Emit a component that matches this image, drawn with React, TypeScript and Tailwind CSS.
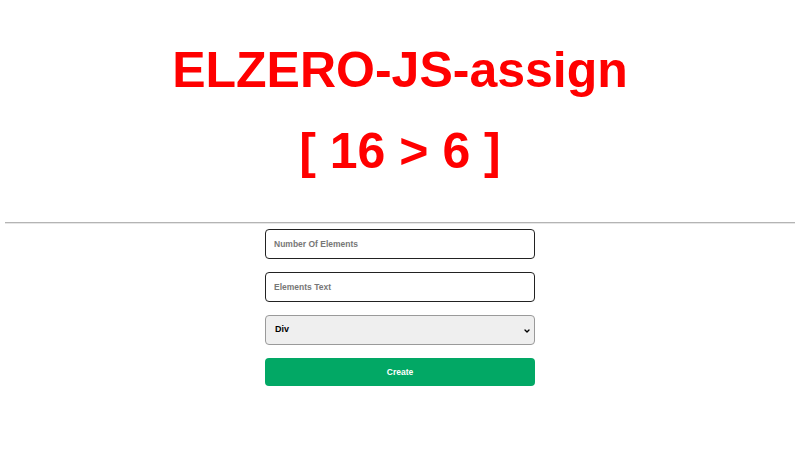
import { ChevronDown } from "lucide-react";

const font = { fontFamily: '"Liberation Sans", Arial, sans-serif' };

export default function App() {
  return (
    <div className="min-h-[450px] bg-white px-[5px]" style={font}>
      <header className="pt-[41px] pb-[42px] text-center text-[50px] font-bold leading-[58px] text-[#f00]">
        <h1>ELZERO-JS-assign</h1>
        <h1 className="mt-[23px]">[ 16 &gt; 6 ]</h1>
      </header>

      <hr className="border-t border-b border-t-[#b4b4b4] border-b-[#e6e6e6]" />

      <form
        className="mx-auto mt-[5px] flex w-[270px] flex-col gap-[13px]"
        onSubmit={(e) => e.preventDefault()}
      >
        <input
          type="number"
          placeholder="Number Of Elements"
          className="h-[30px] rounded-[4px] border border-[#222] px-[8px] text-[8.5px] font-bold text-black outline-none placeholder:text-[#777]"
        />
        <input
          type="text"
          placeholder="Elements Text"
          className="h-[30px] rounded-[4px] border border-[#222] px-[8px] text-[8.5px] font-bold text-black outline-none placeholder:text-[#777]"
        />
        <div className="relative">
          <select className="h-[30px] w-full appearance-none rounded-[4px] border border-[#9a9a9a] bg-[#efefef] px-[9px] text-[9px] font-bold text-black outline-none">
            <option>Div</option>
            <option>Section</option>
          </select>
          <ChevronDown
            className="pointer-events-none absolute right-[4px] top-[12px] h-[8px] w-[8px] text-black"
            strokeWidth={4}
          />
        </div>
        <button
          type="submit"
          className="h-[28px] rounded-[4px] bg-[#02a865] text-[8.5px] font-bold text-white"
        >
          Create
        </button>
      </form>
    </div>
  );
}
